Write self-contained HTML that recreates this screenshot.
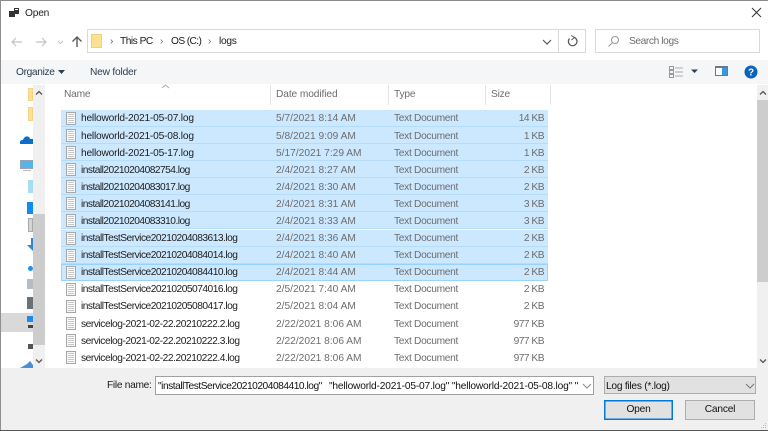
<!DOCTYPE html>
<html><head><meta charset="utf-8"><style>
html,body{margin:0;padding:0;background:#fff}
#w{position:relative;width:768px;height:431px;overflow:hidden;background:#fff;font-family:"Liberation Sans",sans-serif;font-size:10.2px;color:#1a1a1a;filter:blur(.35px)}
#w div,#w svg{position:absolute}
.t{white-space:nowrap;line-height:12px;letter-spacing:-.2px}
.g{color:#6d6d6d}
.sel{left:61px;width:487px;height:16px;background:#cce8ff;border-bottom:1px solid #b5dcfb}
.n{left:81px;color:#202020;white-space:nowrap;line-height:12px;margin-top:1px}
.h{letter-spacing:-.2px}.i{letter-spacing:-.5px}.q{letter-spacing:-.52px}.v{letter-spacing:-.44px}
.d{left:276px;color:#6d6d6d;white-space:nowrap;line-height:12px;margin-top:1px}
.y{left:394px;color:#6d6d6d;white-space:nowrap;line-height:12px;letter-spacing:-.3px;margin-top:1px}
.s{right:224px;color:#6d6d6d;white-space:nowrap;line-height:12px;text-align:right;letter-spacing:-.5px;margin-top:1px}
.ic{left:66px;width:8px;height:11px;border:1px solid #a8a8a8;background:repeating-linear-gradient(#fff 0 1px,#c6c6c6 1px 2px);box-shadow:inset 0 0 0 1px #f6f6f6}
</style></head><body><div id="w">
<div style="left:0;top:0;width:768px;height:1px;background:#8a8a8a"></div>
<div style="left:0;top:0;width:1px;height:431px;background:#8f8f8f"></div>
<div style="left:0;top:430px;width:768px;height:1px;background:#555"></div>

<svg style="left:9px;top:8px" width="11" height="10"><rect x="0" y="3" width="6" height="6" fill="#333"/><rect x="5" y="0" width="5" height="6" fill="#333"/><rect x="6" y="1" width="3" height="1" fill="#fff"/></svg>
<div class="t" style="left:25px;top:8px;color:#222">Open</div>
<svg style="left:750px;top:6px" width="14" height="14"><path d="M2 2L11 11M11 2L2 11" stroke="#333" stroke-width="1" fill="none"/></svg>

<svg style="left:10px;top:34px" width="80" height="16" fill="none"><path d="M2 8H12M6 4L2 8L6 12" stroke="#c4c4c4" stroke-width="1.2"/><path d="M26 8H36M32 4L36 8L32 12" stroke="#c4c4c4" stroke-width="1.2"/><path d="M48 7L50.500 9.500L53 7" stroke="#c4c4c4"/><path d="M67 13V3M62.500 7.500L67 3L71.500 7.500" stroke="#5a5a5a" stroke-width="1.4"/></svg>

<div style="left:87px;top:29px;width:499px;height:24px;border:1px solid #d9d9d9;box-sizing:border-box"></div>
<div style="left:91px;top:34px;width:11px;height:14px;background:#fde18f;border:1px solid #f0cf7a;box-sizing:border-box"></div>
<div class="t g" style="left:110px;top:36px;color:#666">&#8250;</div>
<div class="t" style="left:120px;top:36px;letter-spacing:-.5px">This PC</div>
<div class="t g" style="left:160px;top:36px;color:#666">&#8250;</div>
<div class="t" style="left:171px;top:36px;letter-spacing:-.6px">OS (C:)</div>
<div class="t g" style="left:208px;top:36px;color:#666">&#8250;</div>
<div class="t" style="left:219px;top:36px;letter-spacing:-.3px">logs</div>
<svg style="left:541px;top:38px" width="12" height="8" fill="none"><path d="M2 2L6 6L10 2" stroke="#555" stroke-width="1.200"/></svg>
<div style="left:558px;top:29px;width:1px;height:24px;background:#d9d9d9"></div>
<svg style="left:566px;top:35px" width="13" height="13" fill="none"><path d="M3.500 3.500A4.300 4.300 0 1 0 8 2.300" stroke="#555" stroke-width="1.200"/><path d="M5 0.500L8.500 2.500L5.500 5" stroke="#555"/></svg>
<div style="left:595px;top:29px;width:165px;height:24px;border:1px solid #d9d9d9;box-sizing:border-box"></div>
<svg style="left:607px;top:35px" width="13" height="13" fill="none"><circle cx="8" cy="5" r="3.500" stroke="#999"/><path d="M5.500 7.500L1.500 11.500" stroke="#999"/></svg>
<div class="t" style="left:629px;top:36px;color:#6d6d6d;letter-spacing:-.4px">Search logs</div>

<div style="left:1px;top:60px;width:767px;height:24px;background:#f5f6f7"></div>
<div class="t" style="left:16px;top:66.500px;color:#2c3e50;letter-spacing:-.35px">Organize</div>
<svg style="left:58px;top:70px" width="8" height="5"><path d="M0 0H7L3.500 4Z" fill="#2c3e50"/></svg>
<div class="t" style="left:90px;top:66.500px;color:#2c3e50">New folder</div>
<svg style="left:669px;top:65px" width="30" height="14" fill="none"><rect x=".500" y="1.500" width="4" height="3" stroke="#999"/><rect x=".500" y="5.500" width="4" height="3" stroke="#999"/><rect x=".500" y="9.500" width="4" height="3" stroke="#999"/><path d="M6 3H14M6 7H14M6 11H14" stroke="#aaa"/><path d="M22 4.500H29L25.500 8Z" fill="#2c3e50"/></svg>
<svg style="left:715px;top:66px" width="14" height="12"><rect x=".500" y=".500" width="12" height="9" fill="#fff" stroke="#6a7a8a"/><rect x="7" y="1" width="5" height="8" fill="#3a96dd"/><rect x="1" y="1" width="11" height="1" fill="#6a7a8a"/></svg>
<svg style="left:744px;top:65px" width="14" height="14"><circle cx="7" cy="7" r="6.500" fill="#0a62bd"/><text x="7" y="10.500" font-family="Liberation Sans" font-size="10" font-weight="bold" fill="#fff" text-anchor="middle">?</text></svg>

<!-- nav pane -->
<div style="left:28px;top:88px;width:5px;height:13px;background:#fde18f;border:1px solid #f3d485;box-sizing:border-box"></div>
<div style="left:28px;top:107px;width:5px;height:14px;background:#fde18f;border:1px solid #f3d485;box-sizing:border-box"></div>
<svg style="left:20px;top:135px" width="13" height="10"><path d="M0 9Q-1 5 3 5Q5 0 9 2Q10 3 10 4H13V9Z" fill="#0a6fc9"/></svg>
<svg style="left:20px;top:160px" width="13" height="13"><rect x="0" y="0" width="13" height="9" fill="#9aa4ac"/><rect x="1" y="1" width="12" height="7" fill="#55b4ee"/><rect x="3" y="10" width="8" height="1" fill="#bbb"/></svg>
<div style="left:28px;top:180px;width:5px;height:13px;background:#a8dcf2"></div>
<div style="left:27px;top:202px;width:6px;height:12px;background:#0f8cf0"></div>
<div style="left:28px;top:218px;width:5px;height:14px;background:#d4d4d4;border:1px solid #aaa;box-sizing:border-box"></div>
<svg style="left:27px;top:238px" width="6" height="13"><path d="M6 0V13L0 7H4V0Z" fill="#2f87d9"/></svg>
<div style="left:28px;top:266px;width:5px;height:5px;border-radius:3px;background:#1e90f0"></div>
<div style="left:27px;top:279px;width:6px;height:10px;background:#b4bcc4"></div>
<div style="left:27px;top:297px;width:6px;height:12px;background:#6a7078"></div>
<div style="left:1px;top:313px;width:32px;height:19px;background:#d9d9d9"></div>
<div style="left:27px;top:316px;width:6px;height:6px;background:#1a8cf0"></div>
<div style="left:28px;top:325px;width:5px;height:3px;background:#444"></div>
<div style="left:28px;top:344px;width:5px;height:5px;background:#555"></div>
<svg style="left:20px;top:361px" width="13" height="7"><path d="M0 7L7 3L10 0L13 4V7Z" fill="#4a90d0"/></svg>

<div style="left:33px;top:85px;width:12px;height:283px;background:#f0f0f0"></div>
<div style="left:33px;top:214px;width:12px;height:131px;background:#cdcdcd"></div>
<svg style="left:35px;top:90px" width="8" height="6" fill="none"><path d="M1 4.500L4 1.500L7 4.500" stroke="#555" stroke-width="1.300"/></svg>
<svg style="left:35px;top:358px" width="8" height="6" fill="none"><path d="M1 1.500L4 4.500L7 1.500" stroke="#555" stroke-width="1.300"/></svg>

<!-- header -->
<div class="t g" style="left:64px;top:89px">Name</div>
<svg style="left:161px;top:84px" width="9" height="5" fill="none"><path d="M1 4L4.500 1L8 4" stroke="#aaa"/></svg>
<div style="left:270px;top:85px;width:1px;height:20px;background:#e5e5e5"></div>
<div class="t g" style="left:276px;top:89px;letter-spacing:-.1px">Date modified</div>
<div style="left:388px;top:85px;width:1px;height:20px;background:#e5e5e5"></div>
<div class="t g" style="left:394px;top:89px">Type</div>
<div style="left:485px;top:85px;width:1px;height:20px;background:#e5e5e5"></div>
<div class="t g" style="left:491px;top:89px">Size</div>
<div style="left:550px;top:85px;width:1px;height:20px;background:#e5e5e5"></div>

<!-- selection -->
<div class="sel" style="top:110px"></div>
<div class="sel" style="top:127px"></div>
<div class="sel" style="top:144px"></div>
<div class="sel" style="top:161px"></div>
<div class="sel" style="top:178px"></div>
<div class="sel" style="top:195px"></div>
<div class="sel" style="top:212px"></div>
<div class="sel" style="top:230px"></div>
<div class="sel" style="top:247px"></div>
<div class="sel" style="top:264px;height:15px;border:1px solid #99d1ff;box-sizing:content-box;left:61px;width:485px"></div>

<!-- rows -->
<div class="ic" style="top:112px"></div><div class="n h" style="top:112px">helloworld-2021-05-07.log</div><div class="d" style="top:112px">5/7/2021 8:14 AM</div><div class="y" style="top:112px">Text Document</div><div class="s" style="top:112px">14 KB</div>
<div class="ic" style="top:129px"></div><div class="n h" style="top:130px">helloworld-2021-05-08.log</div><div class="d" style="top:130px">5/8/2021 9:09 AM</div><div class="y" style="top:130px">Text Document</div><div class="s" style="top:130px">1 KB</div>
<div class="ic" style="top:146px"></div><div class="n h" style="top:147px">helloworld-2021-05-17.log</div><div class="d" style="top:147px">5/17/2021 7:29 AM</div><div class="y" style="top:147px">Text Document</div><div class="s" style="top:147px">1 KB</div>
<div class="ic" style="top:163px"></div><div class="n q" style="top:164px">install20210204082754.log</div><div class="d" style="top:164px">2/4/2021 8:27 AM</div><div class="y" style="top:164px">Text Document</div><div class="s" style="top:164px">2 KB</div>
<div class="ic" style="top:180px"></div><div class="n q" style="top:181px">install20210204083017.log</div><div class="d" style="top:181px">2/4/2021 8:30 AM</div><div class="y" style="top:181px">Text Document</div><div class="s" style="top:181px">2 KB</div>
<div class="ic" style="top:197px"></div><div class="n q" style="top:198px">install20210204083141.log</div><div class="d" style="top:198px">2/4/2021 8:31 AM</div><div class="y" style="top:198px">Text Document</div><div class="s" style="top:198px">3 KB</div>
<div class="ic" style="top:214px"></div><div class="n q" style="top:215px">install20210204083310.log</div><div class="d" style="top:215px">2/4/2021 8:33 AM</div><div class="y" style="top:215px">Text Document</div><div class="s" style="top:215px">3 KB</div>
<div class="ic" style="top:232px"></div><div class="n i" style="top:232px">installTestService20210204083613.log</div><div class="d" style="top:232px">2/4/2021 8:36 AM</div><div class="y" style="top:232px">Text Document</div><div class="s" style="top:232px">2 KB</div>
<div class="ic" style="top:249px"></div><div class="n i" style="top:249px">installTestService20210204084014.log</div><div class="d" style="top:249px">2/4/2021 8:40 AM</div><div class="y" style="top:249px">Text Document</div><div class="s" style="top:249px">2 KB</div>
<div class="ic" style="top:266px"></div><div class="n i" style="top:266px">installTestService20210204084410.log</div><div class="d" style="top:266px">2/4/2021 8:44 AM</div><div class="y" style="top:266px">Text Document</div><div class="s" style="top:266px">2 KB</div>
<div class="ic" style="top:283px"></div><div class="n i" style="top:283px">installTestService20210205074016.log</div><div class="d" style="top:283px">2/5/2021 7:40 AM</div><div class="y" style="top:283px">Text Document</div><div class="s" style="top:283px">2 KB</div>
<div class="ic" style="top:300px"></div><div class="n i" style="top:300px">installTestService20210205080417.log</div><div class="d" style="top:300px">2/5/2021 8:04 AM</div><div class="y" style="top:300px">Text Document</div><div class="s" style="top:300px">2 KB</div>
<div class="ic" style="top:317px"></div><div class="n v" style="top:318px">servicelog-2021-02-22.20210222.2.log</div><div class="d" style="top:318px">2/22/2021 8:06 AM</div><div class="y" style="top:318px">Text Document</div><div class="s" style="top:318px">977 KB</div>
<div class="ic" style="top:334px"></div><div class="n v" style="top:335px">servicelog-2021-02-22.20210222.3.log</div><div class="d" style="top:335px">2/22/2021 8:06 AM</div><div class="y" style="top:335px">Text Document</div><div class="s" style="top:335px">977 KB</div>
<div class="ic" style="top:351px"></div><div class="n v" style="top:352px">servicelog-2021-02-22.20210222.4.log</div><div class="d" style="top:352px">2/22/2021 8:06 AM</div><div class="y" style="top:352px">Text Document</div><div class="s" style="top:352px">977 KB</div>

<!-- right scrollbar -->
<div style="left:757px;top:85px;width:11px;height:283px;background:#f0f0f0"></div>
<div style="left:757px;top:100px;width:11px;height:182px;background:#cdcdcd"></div>
<svg style="left:759px;top:90px" width="8" height="6" fill="none"><path d="M1 4.500L4 1.500L7 4.500" stroke="#555" stroke-width="1.300"/></svg>
<svg style="left:759px;top:358px" width="8" height="6" fill="none"><path d="M1 1.500L4 4.500L7 1.500" stroke="#555" stroke-width="1.300"/></svg>

<!-- bottom panel -->
<div style="left:1px;top:368px;width:767px;height:62px;background:#f0f0f0"></div>
<div class="t" style="left:107px;top:380px;color:#1a1a1a;letter-spacing:-.3px">File name:</div>
<div style="left:155px;top:376px;width:439px;height:19px;background:#fff;border:1px solid #a0a0a0;box-sizing:border-box"></div>
<div class="t" style="left:158px;top:381px;color:#111;letter-spacing:-.47px">"installTestService20210204084410.log"</div>
<div class="t" style="left:329px;top:381px;color:#111;letter-spacing:-.18px">"helloworld-2021-05-07.log" "helloworld-2021-05-08.log" "</div>
<svg style="left:582px;top:383px" width="10" height="6" fill="none"><path d="M1 1L5 5L9 1" stroke="#888"/></svg>
<div style="left:604px;top:376px;width:152px;height:18px;background:#e1e1e1;border:1px solid #adadad;box-sizing:border-box"></div>
<div class="t" style="left:606px;top:381px;color:#111;letter-spacing:-.25px">Log files (*.log)</div>
<svg style="left:745px;top:383px" width="10" height="6" fill="none"><path d="M1 1L5 5L9 1" stroke="#777"/></svg>
<div style="left:604px;top:400px;width:69px;height:20px;background:#e1e1e1;border:1px solid #0078d7;box-shadow:inset 0 0 0 .5px #0078d7;box-sizing:border-box"></div>
<div class="t" style="left:604px;top:404px;width:69px;text-align:center;color:#111">Open</div>
<div style="left:685px;top:400px;width:70px;height:20px;background:#e1e1e1;border:1px solid #adadad;box-sizing:border-box"></div>
<div class="t" style="left:685px;top:404px;width:70px;text-align:center;color:#111">Cancel</div>
<svg style="left:760px;top:422px" width="7" height="7"><path d="M5 1h1v1H5zM3 3h1v1H3zM5 3h1v1H5zM1 5h1v1H1zM3 5h1v1H3zM5 5h1v1H5z" fill="#bbb"/></svg>
</div></body></html>
